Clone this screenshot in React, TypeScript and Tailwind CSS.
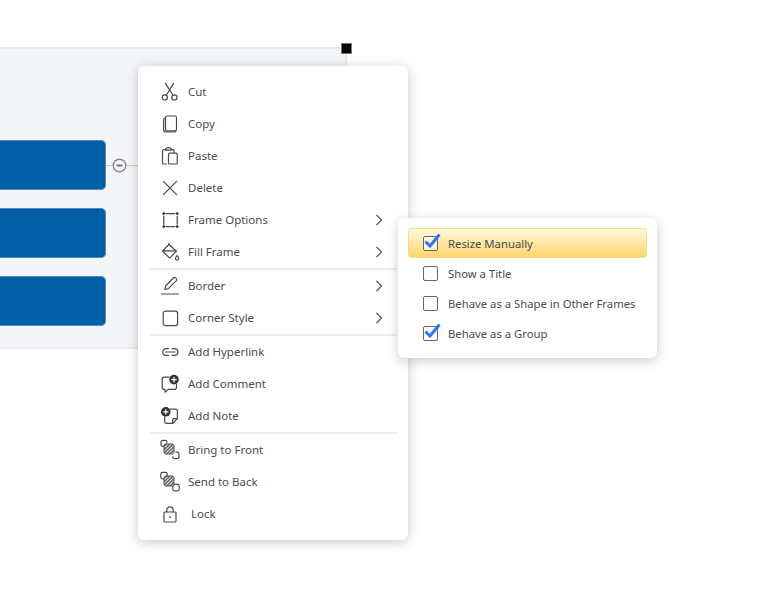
import type { ReactNode } from 'react'

const stroke = {
  fill: 'none',
  stroke: '#4a4a4a',
  strokeWidth: 1.2,
  strokeLinecap: 'round' as const,
  strokeLinejoin: 'round' as const,
}

function Icon({ children }: { children: ReactNode }) {
  return (
    <svg className="w-6 h-6 shrink-0" viewBox="0 0 24 24" {...stroke}>
      {children}
    </svg>
  )
}

function Hatched({ d }: { d: string }) {
  return <path d={d} fill="url(#hatch)" stroke="#4a4a4a" strokeWidth={1} />
}

const icons: Record<string, ReactNode> = {
  cut: (
    <>
      <circle cx="6.8" cy="17.4" r="2.6" />
      <circle cx="16.4" cy="17.4" r="2.6" />
      <path d="M8.2 15.2 15.8 3.4M15 15.2 7.4 3.4" />
    </>
  ),
  copy: (
    <>
      <rect x="7.5" y="4" width="11" height="14.8" rx="1.6" />
      <path d="M7.5 5.5C6.3 6 5.6 6.6 5.6 7.6v10.2c0 1.3.8 2.2 2.2 2.2h8.4c.8 0 1.4-.4 1.8-1.2" />
    </>
  ),
  paste: (
    <>
      <path d="M8.5 20H5.8c-.8 0-1.3-.5-1.3-1.3V7c0-.8.5-1.3 1.3-1.3h2M13 5.7h1.8c.8 0 1.3.5 1.3 1.3v1.8" />
      <path d="M7.8 6.2V4.8c0-.6 1.2-1.2 2.6-1.2s2.6.6 2.6 1.2v1.4z" />
      <rect x="10.5" y="9.2" width="8.8" height="10.8" rx="1.3" />
    </>
  ),
  del: <path d="M5.4 5.4 18.6 18.6M18.6 5.4 5.4 18.6" />,
  frame: (
    <>
      <path d="M8.2 5.6h8.6M8.2 18.6h8.6M5.8 8v8.2M19.2 8v8.2" />
      <g fill="#333" stroke="none">
        <circle cx="5.8" cy="5.6" r="1.4" />
        <circle cx="19.2" cy="5.6" r="1.4" />
        <circle cx="5.8" cy="18.6" r="1.4" />
        <circle cx="19.2" cy="18.6" r="1.4" />
      </g>
    </>
  ),
  fill: (
    <>
      <path d="M11 4.5 4.5 11l6.4 6.4c.5.5 1.1.5 1.6 0l5.9-6.2z" />
      <path d="M5 10.8h13" />
      <path d="M11 4.5V3.4" />
      <path d="M19 15.5c-.9 1.3-1.5 2.1-1.5 2.9a1.6 1.6 0 0 0 3.2 0c0-.8-.7-1.6-1.7-2.9z" />
    </>
  ),
  border: (
    <>
      <path d="M6.8 15.5 7.6 12 15.4 4c.7-.7 1.6-.7 2.2-.1l.7.7c.6.6.6 1.5-.1 2.2l-7.9 7.9z" />
      <path d="M3.5 20h17" />
    </>
  ),
  corner: <rect x="5.2" y="5.2" width="14.4" height="14.4" rx="2.2" />,
  link: (
    <>
      <path d="M10.5 8.6H8.2a3.4 3.4 0 0 0 0 6.8h2.3M14.2 8.6h2.3a3.4 3.4 0 0 1 0 6.8h-2.3" />
      <path d="M7.5 12h9.6" />
    </>
  ),
  comment: (
    <>
      <path d="M11 5.2H6.4C5 5.2 4.2 6 4.2 7.4v7.8c0 1.4.8 2.2 2.2 2.2h.5l.2 2.8 3.2-2.8h6c1.4 0 2.2-.8 2.2-2.2V12" />
      <circle cx="16" cy="7.6" r="4.8" fill="#333" stroke="none" />
      <path d="M16 5.3v4.6M13.7 7.6h4.6" stroke="#fff" />
    </>
  ),
  note: (
    <>
      <path d="M12.5 5.2h5c1.2 0 1.9.7 1.9 1.9v7.4l-4.6 4.8H8.6c-1.2 0-1.9-.7-1.9-1.9v-4.900" />
      <path d="M19.2 14.6h-3.4c-.7 0-1.1.4-1.1 1.1v3.4" />
      <circle cx="7.8" cy="7.8" r="4.8" fill="#333" stroke="none" />
      <path d="M7.8 5.5v4.6M5.500 7.8h4.6" stroke="#fff" />
    </>
  ),
  front: (
    <>
      <path d="M6 8.4H5C3.7 8.4 3 7.6 3 6.4v-2C3 3.1 3.8 2.4 5 2.4h2c1.2 0 1.9.7 1.9 1.9" />
      <Hatched d="M8.2 6h5.6C15.2 6 16 6.800 16 8.200v5.600c0 1.400-.8 2.200-2.200 2.200H8.200C6.800 16 6 15.200 6 13.800V8.200C6 6.800 6.800 6 8.200 6z" />
      <path d="M18 14.2h1c1.300 0 2 .8 2 2v2.400c0 1.300-.8 2-2 2h-2.200c-1.200 0-1.900-.7-1.900-1.900" />
    </>
  ),
  back: (
    <>
      <rect x="2.8" y="2.4" width="6.4" height="6.4" rx="1.8" />
      <rect x="14.8" y="14.4" width="6.4" height="6.4" rx="1.8" />
      <Hatched d="M8.2 6h5.6C15.2 6 16 6.800 16 8.200v5.600c0 1.400-.8 2.200-2.200 2.200H8.200C6.800 16 6 15.200 6 13.800V8.200C6 6.800 6.800 6 8.200 6z" />
    </>
  ),
  lock: (
    <>
      <rect x="6" y="10" width="12" height="10" rx="0.8" />
      <path d="M8.8 10V8a3.200 3.200 0 0 1 6.400 0v2" />
      <circle cx="12" cy="15.2" r="0.9" fill="#4a4a4a" stroke="none" />
    </>
  ),
}

function MenuRow({ icon, label, arrow, textClass = '' }: { icon: string; label: string; arrow?: boolean; textClass?: string }) {
  return (
    <div className="flex items-center h-8 pl-5 pr-6 gap-1.5">
      <Icon>{icons[icon]}</Icon>
      <span className={`flex-1 text-[11.5px] text-[#4b4b4b] ${textClass}`}>{label}</span>
      {arrow && (
        <svg className="w-2 h-3 -translate-x-px" viewBox="0 0 8 12" fill="none" stroke="#555" strokeWidth={1.2}>
          <path d="M1.5 1 6.5 6 1.5 11" />
        </svg>
      )}
    </div>
  )
}

function Divider() {
  return <div className="h-0.5 mx-[11px] bg-[#eeeeee]" />
}

function Check({ checked }: { checked: boolean }) {
  return (
    <span className="relative w-[15px] h-[15px] shrink-0 rounded-[2px] border border-[#666] bg-white/60">
      {checked && (
        <svg className="absolute -top-[5px] -left-[1px] w-[20px] h-[18px]" viewBox="0 0 20 18" fill="none" stroke="#2c78f0" strokeWidth={3}>
          <path d="M2.5 9.5 7 14l9.500-11.500" />
        </svg>
      )}
    </span>
  )
}

function SubRow({ label, checked, active }: { label: string; checked: boolean; active?: boolean }) {
  return (
    <div
      className={`flex items-center h-[30px] pl-[14px] gap-2.5 rounded border text-[11.3px] text-[#4b4b4b] ${
        active ? 'border-[#fbd984] bg-gradient-to-b from-[#fff8dc] to-[#fdd56b]' : 'border-transparent'
      }`}
    >
      <Check checked={checked} />
      <span className="pt-0.5">{label}</span>
    </div>
  )
}

export default function App() {
  return (
    <div className="relative w-[777px] h-[594px] overflow-hidden bg-white font-['Noto_Sans',sans-serif]">
      <svg className="absolute w-0 h-0">
        <defs>
          <pattern id="hatch" width="2.4" height="2.4" patternUnits="userSpaceOnUse" patternTransform="rotate(45)">
            <rect width="2.4" height="2.4" fill="#ddd" />
            <rect width="1.2" height="2.4" fill="#555" />
          </pattern>
        </defs>
      </svg>

      {/* Frame on the canvas */}
      <div className="absolute left-0 top-[47px] w-[347px] h-[302px] border-2 border-l-0 border-[#e8e9eb] bg-[#f4f5f8] pt-[91px] flex flex-col gap-[18px]">
        <div className="flex items-center">
          <div className="w-[106px] h-[50px] rounded-r-[5px] bg-[#005ea6] border border-l-0 border-[#4f8cbf]" />
          <div className="w-1.5 h-px bg-[#ccc]" />
          <svg className="w-[15px] h-[15px]" viewBox="0 0 15 15" fill="none">
            <circle cx="7.5" cy="7.5" r="6.3" stroke="#888" strokeWidth={1.5} />
            <path d="M4.5 7.5h6" stroke="#777" strokeWidth={2} />
          </svg>
          <div className="flex-1 h-px bg-[#ccc]" />
        </div>
        <div className="w-[106px] h-[50px] rounded-r-[5px] bg-[#005ea6] border border-l-0 border-[#4f8cbf]" />
        <div className="w-[106px] h-[50px] rounded-r-[5px] bg-[#005ea6] border border-l-0 border-[#4f8cbf]" />
      </div>
      <div className="absolute left-[341px] top-[43px] w-[11px] h-[11px] bg-black border border-[#777]" />

      {/* Context menu */}
      <div className="absolute left-[138px] top-[66px] w-[270px] py-2.5 rounded-md bg-white shadow-[0_2px_12px_rgba(0,0,0,0.22)]">
        <MenuRow icon="cut" label="Cut" />
        <MenuRow icon="copy" label="Copy" />
        <MenuRow icon="paste" label="Paste" />
        <MenuRow icon="del" label="Delete" />
        <MenuRow icon="frame" label="Frame Options" arrow />
        <MenuRow icon="fill" label="Fill Frame" arrow />
        <Divider />
        <MenuRow icon="border" label="Border" arrow />
        <MenuRow icon="corner" label="Corner Style" arrow />
        <Divider />
        <MenuRow icon="link" label="Add Hyperlink" />
        <MenuRow icon="comment" label="Add Comment" />
        <MenuRow icon="note" label="Add Note" />
        <Divider />
        <MenuRow icon="front" label="Bring to Front" />
        <MenuRow icon="back" label="Send to Back" />
        <MenuRow icon="lock" label="Lock" textClass="pl-[3px]" />
      </div>

      {/* Frame Options submenu */}
      <div className="absolute left-[398px] top-[218px] w-[259px] p-2.5 rounded-md bg-white shadow-[0_3px_12px_rgba(0,0,0,0.2)]">
        <SubRow label="Resize Manually" checked active />
        <SubRow label="Show a Title" checked={false} />
        <SubRow label="Behave as a Shape in Other Frames" checked={false} />
        <SubRow label="Behave as a Group" checked />
      </div>
    </div>
  )
}
